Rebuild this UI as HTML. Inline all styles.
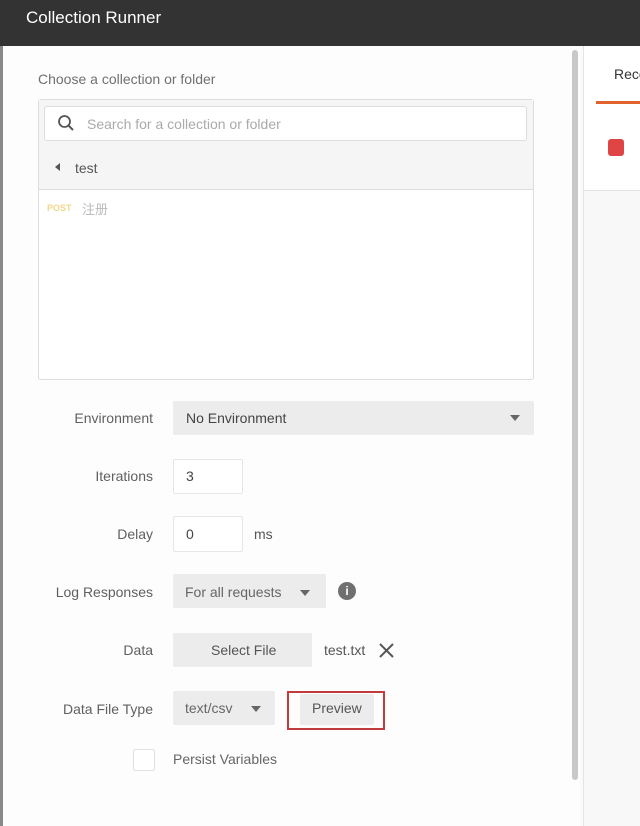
<!DOCTYPE html>
<html><head><meta charset="utf-8"><style>
body{margin:0;width:640px;height:826px;background:#fafafa;font-family:"Liberation Sans","Noto Sans CJK SC",sans-serif;position:relative;overflow:hidden;color:#505050}
.a{position:absolute}
.top{left:0;top:0;width:640px;height:46px;background:#333;color:#fff;font-size:17px}
.lbl{font-size:14px;color:#606060;text-align:right;width:153px;left:0}
.box{background:#ececec;border-radius:2px}
.tri{width:0;height:0;border-left:5px solid transparent;border-right:5px solid transparent;border-top:6px solid #666}
</style></head><body>
<div class="a top"><span class="a" style="left:26px;top:8px">Collection Runner</span></div>
<div class="a" style="left:0;top:46px;width:3px;height:780px;background:#888"></div>
<div class="a" style="left:3px;top:46px;width:577px;height:780px;background:#fdfdfd"></div>
<div class="a" style="left:572px;top:50px;width:6px;height:730px;background:#c8c8c8;border-radius:3px"></div>
<div class="a" style="left:583px;top:46px;width:57px;height:780px;background:#f8f8f8;border-left:1px solid #e4e4e4"></div>
<div class="a" style="left:584px;top:46px;width:56px;height:144px;background:#fff;border-bottom:1px solid #e4e4e4"></div>
<span class="a" style="left:614px;top:66px;font-size:14px;color:#333">Rece</span>
<div class="a" style="left:596px;top:101px;width:44px;height:3px;background:#e0622c"></div>
<div class="a" style="left:608px;top:139px;width:16px;height:17px;background:#e04545;border-radius:3px"></div>

<span class="a" style="left:38px;top:71px;font-size:14px;color:#707070">Choose a collection or folder</span>
<div class="a" style="left:38px;top:99px;width:494px;height:279px;border:1px solid #ddd;background:#fff;border-radius:3px"></div>
<div class="a" style="left:39px;top:100px;width:494px;height:89px;background:#f5f5f5;border-bottom:1px solid #ddd"></div>
<div class="a" style="left:44px;top:106px;width:481px;height:33px;background:#fff;border:1px solid #ddd;border-radius:3px"></div>
<svg class="a" style="left:57px;top:114px" width="18" height="18"><circle cx="7.5" cy="7.5" r="5.5" fill="none" stroke="#555" stroke-width="1.8"/><line x1="11.5" y1="11.5" x2="16" y2="16" stroke="#555" stroke-width="2"/></svg>
<span class="a" style="left:87px;top:116px;font-size:14px;color:#aaa">Search for a collection or folder</span>
<div class="a" style="left:55px;top:163px;width:0;height:0;border-top:4px solid transparent;border-bottom:4px solid transparent;border-right:5px solid #555"></div>
<span class="a" style="left:75px;top:160px;font-size:14px;color:#555">test</span>
<span class="a" style="left:47px;top:203px;font-size:9px;color:#f4d68a;font-weight:bold">POST</span>
<span class="a" style="left:82px;top:199px;font-size:13px;color:#bbb">注册</span>

<span class="a lbl" style="top:410px">Environment</span>
<div class="a box" style="left:173px;top:401px;width:361px;height:34px"></div>
<span class="a" style="left:186px;top:410px;font-size:14px;color:#444">No Environment</span>
<div class="a tri" style="left:510px;top:415px"></div>

<span class="a lbl" style="top:468px">Iterations</span>
<div class="a" style="left:173px;top:459px;width:68px;height:33px;background:#fff;border:1px solid #e6e6e6;border-radius:2px"></div>
<span class="a" style="left:186px;top:468px;font-size:14px;color:#444">3</span>

<span class="a lbl" style="top:526px">Delay</span>
<div class="a" style="left:173px;top:516px;width:68px;height:34px;background:#fff;border:1px solid #e6e6e6;border-radius:2px"></div>
<span class="a" style="left:186px;top:526px;font-size:14px;color:#444">0</span>
<span class="a" style="left:254px;top:526px;font-size:14px;color:#555">ms</span>

<span class="a lbl" style="top:584px">Log Responses</span>
<div class="a box" style="left:173px;top:574px;width:153px;height:34px"></div>
<span class="a" style="left:185px;top:584px;font-size:14px;color:#666">For all requests</span>
<div class="a tri" style="left:300px;top:590px"></div>
<div class="a" style="left:338px;top:582px;width:18px;height:18px;border-radius:50%;background:#707070;color:#fff;font-size:12px;font-weight:bold;text-align:center;line-height:18px">i</div>

<span class="a lbl" style="top:642px">Data</span>
<div class="a box" style="left:173px;top:633px;width:139px;height:34px"></div>
<span class="a" style="left:211px;top:642px;font-size:14px;color:#555">Select File</span>
<span class="a" style="left:324px;top:642px;font-size:14px;color:#555">test.txt</span>
<svg class="a" style="left:379px;top:643px" width="15" height="15"><path d="M1 1L14 14M14 1L1 14" stroke="#555" stroke-width="2"/></svg>

<span class="a lbl" style="top:701px">Data File Type</span>
<div class="a box" style="left:173px;top:691px;width:102px;height:34px"></div>
<span class="a" style="left:185px;top:700px;font-size:14px;color:#666">text/csv</span>
<div class="a tri" style="left:251px;top:706px"></div>
<div class="a" style="left:287px;top:691px;width:98px;height:39px;border:2px solid #c03a3e;box-sizing:border-box"></div>
<div class="a box" style="left:300px;top:694px;width:74px;height:31px"></div>
<span class="a" style="left:312px;top:700px;font-size:14px;color:#555">Preview</span>

<div class="a" style="left:133px;top:749px;width:20px;height:20px;border:1px solid #e2e2e2;border-radius:2px;background:#fff"></div>
<span class="a" style="left:173px;top:751px;font-size:14px;color:#666">Persist Variables</span>
</body></html>
